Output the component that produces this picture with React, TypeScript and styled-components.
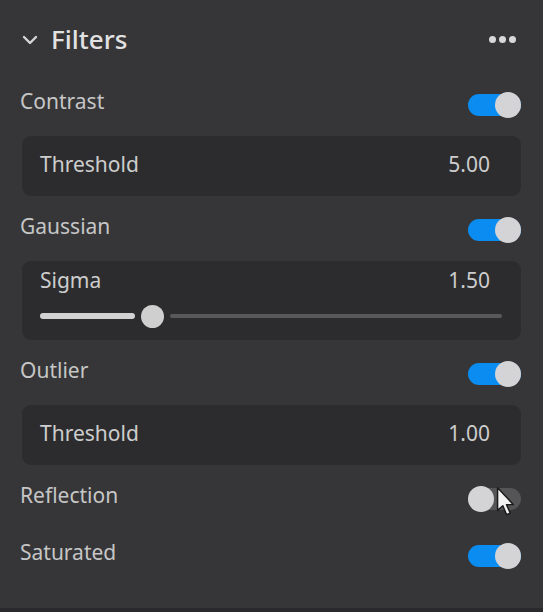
import React from "react";
import styled, { createGlobalStyle } from "styled-components";

const GlobalStyle = createGlobalStyle`
  html, body {
    margin: 0;
    padding: 0;
    background: #2a2a2c;
  }
  body {
    font-family: "Noto Sans", "Open Sans", sans-serif;
  }
`;

type Filter = {
  name: string;
  on: boolean;
  param?: { label: string; value: string; slider?: number };
};

const filters: Filter[] = [
  { name: "Contrast", on: true, param: { label: "Threshold", value: "5.00" } },
  { name: "Gaussian", on: true, param: { label: "Sigma", value: "1.50", slider: 0.205 } },
  { name: "Outlier", on: true, param: { label: "Threshold", value: "1.00" } },
  { name: "Reflection", on: false },
  { name: "Saturated", on: true },
];

const Switch = ({ on, hovered }: { on: boolean; hovered?: boolean }) => (
  <SwitchBox>
    <Track $on={on} />
    <Knob $on={on} />
    {hovered && (
      <Cursor width="20" height="32" viewBox="0 0 19 30">
        <path
          d="M1.5 1.5 L1.5 23 L6.5 18.5 L10 27 L13.5 25.5 L10 17.5 L16.5 17.5 Z"
          fill="#f2f2f2"
          stroke="#1a1a1a"
          strokeWidth="1.4"
          strokeLinejoin="round"
        />
      </Cursor>
    )}
  </SwitchBox>
);

export default function App() {
  return (
    <>
      <GlobalStyle />
      <Panel>
        <Header>
          <Title>
            <svg width="16" height="10" viewBox="0 0 16 10">
              <path
                d="M2 2 L8 8 L14 2"
                fill="none"
                stroke="#d6d6d6"
                strokeWidth="2.4"
                strokeLinecap="round"
                strokeLinejoin="round"
              />
            </svg>
            Filters
          </Title>
          <Dots>
            <span />
            <span />
            <span />
          </Dots>
        </Header>
        <List>
          {filters.map((f) => (
            <Group key={f.name}>
              <ToggleRow>
                <Label>{f.name}</Label>
                <Switch on={f.on} hovered={f.name === "Reflection"} />
              </ToggleRow>
              {f.param && (
                <Card $tall={f.param.slider !== undefined}>
                  <ParamRow $tall={f.param.slider !== undefined}>
                    <span>{f.param.label}</span>
                    <span>{f.param.value}</span>
                  </ParamRow>
                  {f.param.slider !== undefined && (
                    <Slider>
                      <Fill style={{ width: `${f.param.slider * 100}%` }} />
                      <Thumb />
                      <Rest />
                    </Slider>
                  )}
                </Card>
              )}
            </Group>
          ))}
        </List>
      </Panel>
    </>
  );
}

const Panel = styled.div`
  width: 543px;
  height: 608px;
  background: #363638;
  box-sizing: border-box;
  padding: 0 22px 0 20px;
  display: flex;
  flex-direction: column;
`;

const Header = styled.div`
  height: 78px;
  display: flex;
  align-items: center;
  justify-content: space-between;
`;

const Title = styled.div`
  display: flex;
  align-items: center;
  gap: 13px;
  padding-left: 2px;
  font-size: 26px;
  font-weight: 500;
  color: #e2e2e2;
  svg {
    margin-top: 2px;
  }
`;

const Dots = styled.div`
  display: flex;
  gap: 3px;
  margin-right: 5px;
  span {
    width: 7px;
    height: 7px;
    border-radius: 50%;
    background: #d8d8d8;
  }
`;

const List = styled.div`
  display: flex;
  flex-direction: column;
  gap: 7px;
`;

const Group = styled.div`
  display: flex;
  flex-direction: column;
  gap: 8px;
`;

const ToggleRow = styled.div`
  height: 50px;
  display: flex;
  align-items: center;
  justify-content: space-between;
`;

const Label = styled.span`
  font-size: 21px;
  color: #c6c6c6;
  margin-top: -5px;
`;

const SwitchBox = styled.div`
  position: relative;
  width: 53px;
  height: 26px;
  margin-top: 3px;
`;

const Track = styled.div<{ $on: boolean }>`
  position: absolute;
  left: 0;
  right: 0;
  top: 2px;
  bottom: 2px;
  border-radius: 11px;
  background: ${(p) => (p.$on ? "#0a8cf0" : "#555557")};
`;

const Knob = styled.div<{ $on: boolean }>`
  position: absolute;
  top: 0;
  ${(p) => (p.$on ? "right: 0;" : "left: 0;")}
  width: 26px;
  height: 26px;
  border-radius: 50%;
  background: #d4d4d6;
`;

const Cursor = styled.svg`
  position: absolute;
  left: 28px;
  top: 0;
`;

const Card = styled.div<{ $tall: boolean }>`
  margin-left: 2px;
  background: #2c2c2e;
  border-radius: 9px;
  height: ${(p) => (p.$tall ? "79px" : "60px")};
  box-sizing: border-box;
  padding: ${(p) => (p.$tall ? "9px 19px 0 18px" : "0 31px 0 18px")};
  display: flex;
  flex-direction: column;
  justify-content: ${(p) => (p.$tall ? "flex-start" : "center")};
`;

const ParamRow = styled.div<{ $tall: boolean }>`
  display: flex;
  justify-content: space-between;
  font-size: 21px;
  color: #cdcdcd;
  margin-top: -4px;
  margin-right: ${(p) => (p.$tall ? "12px" : "0")};
`;

const Slider = styled.div`
  display: flex;
  align-items: center;
  gap: 6px;
  margin-top: 10px;
  height: 24px;
`;

const Fill = styled.div`
  height: 6px;
  border-radius: 3px;
  background: #d2d2d2;
`;

const Thumb = styled.div`
  width: 23px;
  height: 23px;
  border-radius: 50%;
  background: #cfcfd0;
  flex-shrink: 0;
`;

const Rest = styled.div`
  flex: 1;
  height: 4px;
  border-radius: 2px;
  background: #59595b;
`;
